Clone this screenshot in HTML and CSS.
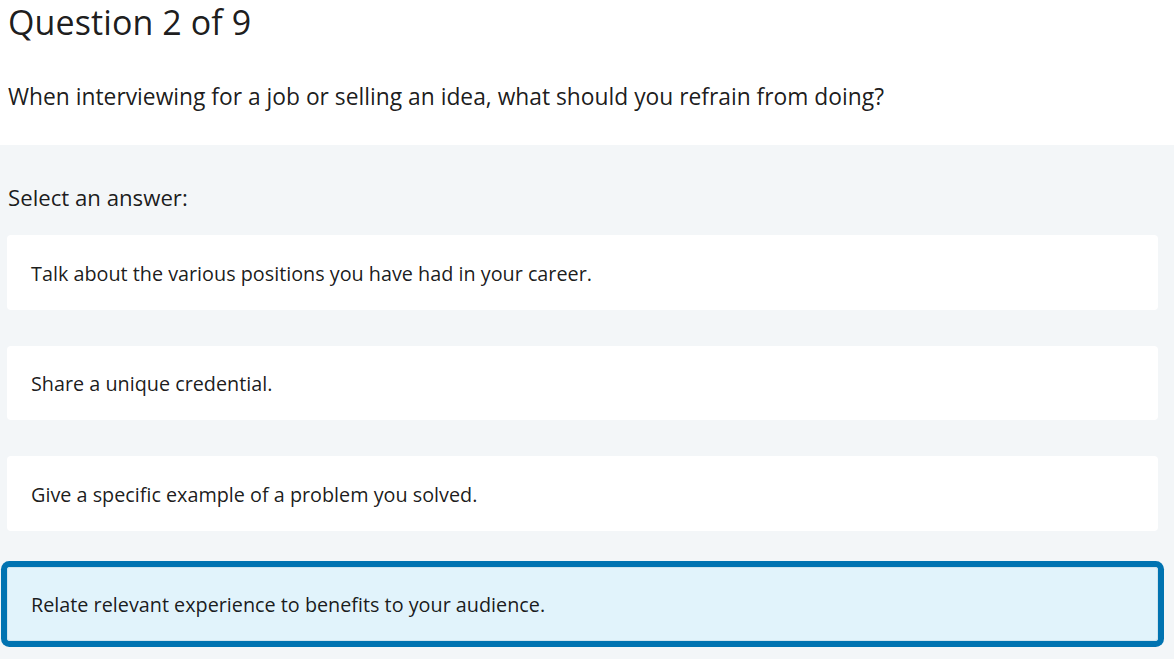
FILE: index.html
```html
<!DOCTYPE html>
<html lang="en">
<head>
    <meta charset="UTF-8">
    <meta name="viewport" content="width=device-width, initial-scale=1.0">
    <title>Quiz - Question 2 of 9</title>
    <link rel="stylesheet" href="styles.css">
</head>
<body>
    <div class="question-header">
        <h1>Question 2 of 9</h1>
        <p class="question-text">When interviewing for a job or selling an idea, what should you refrain from doing?</p>
    </div>

    <div class="answers">
        <p class="answers-label">Select an answer:</p>
        <ul class="answer-list">
            <li class="answer">Talk about the various positions you have had in your career.</li>
            <li class="answer">Share a unique credential.</li>
            <li class="answer">Give a specific example of a problem you solved.</li>
            <li class="answer selected">Relate relevant experience to benefits to your audience.</li>
        </ul>
    </div>
</body>
</html>
```

FILE: styles.css
```css
body {
    margin: 0;
    font-family: "Open Sans", "Noto Sans", Arial, sans-serif;
    color: rgba(0, 0, 0, 0.9);
    background-color: #fff;
}
.question-header {
    padding: 0 8px 34px 8px;
}
.question-header h1 {
    margin: 0;
    font-size: 34px;
    line-height: 44px;
    font-weight: 400;
    letter-spacing: 0.1px;
}
.question-text {
    margin: 39px 0 0 0;
    font-size: 22.8px;
    line-height: 28px;
}
.answers {
    background: #f3f6f8;
    padding: 39px 16px 19px 7px;
}
.answers-label {
    margin: 0 0 23px 1px;
    font-size: 22.2px;
    line-height: 28px;
}
.answer-list {
    list-style: none;
    margin: 0;
    padding: 0;
    display: flex;
    flex-direction: column;
    gap: 36px;
}
.answer {
    background: #fff;
    border-radius: 4px;
    height: 74.5px;
    box-sizing: border-box;
    padding: 2px 24px 0 24px;
    display: flex;
    align-items: center;
    font-size: 19.8px;
}
.answer.selected {
    background: #e1f3fb;
    box-shadow: 0 0 0 1px #cfe4ee inset, 0 0 0 6px #0073b1;
    border-radius: 3px;
}
```
